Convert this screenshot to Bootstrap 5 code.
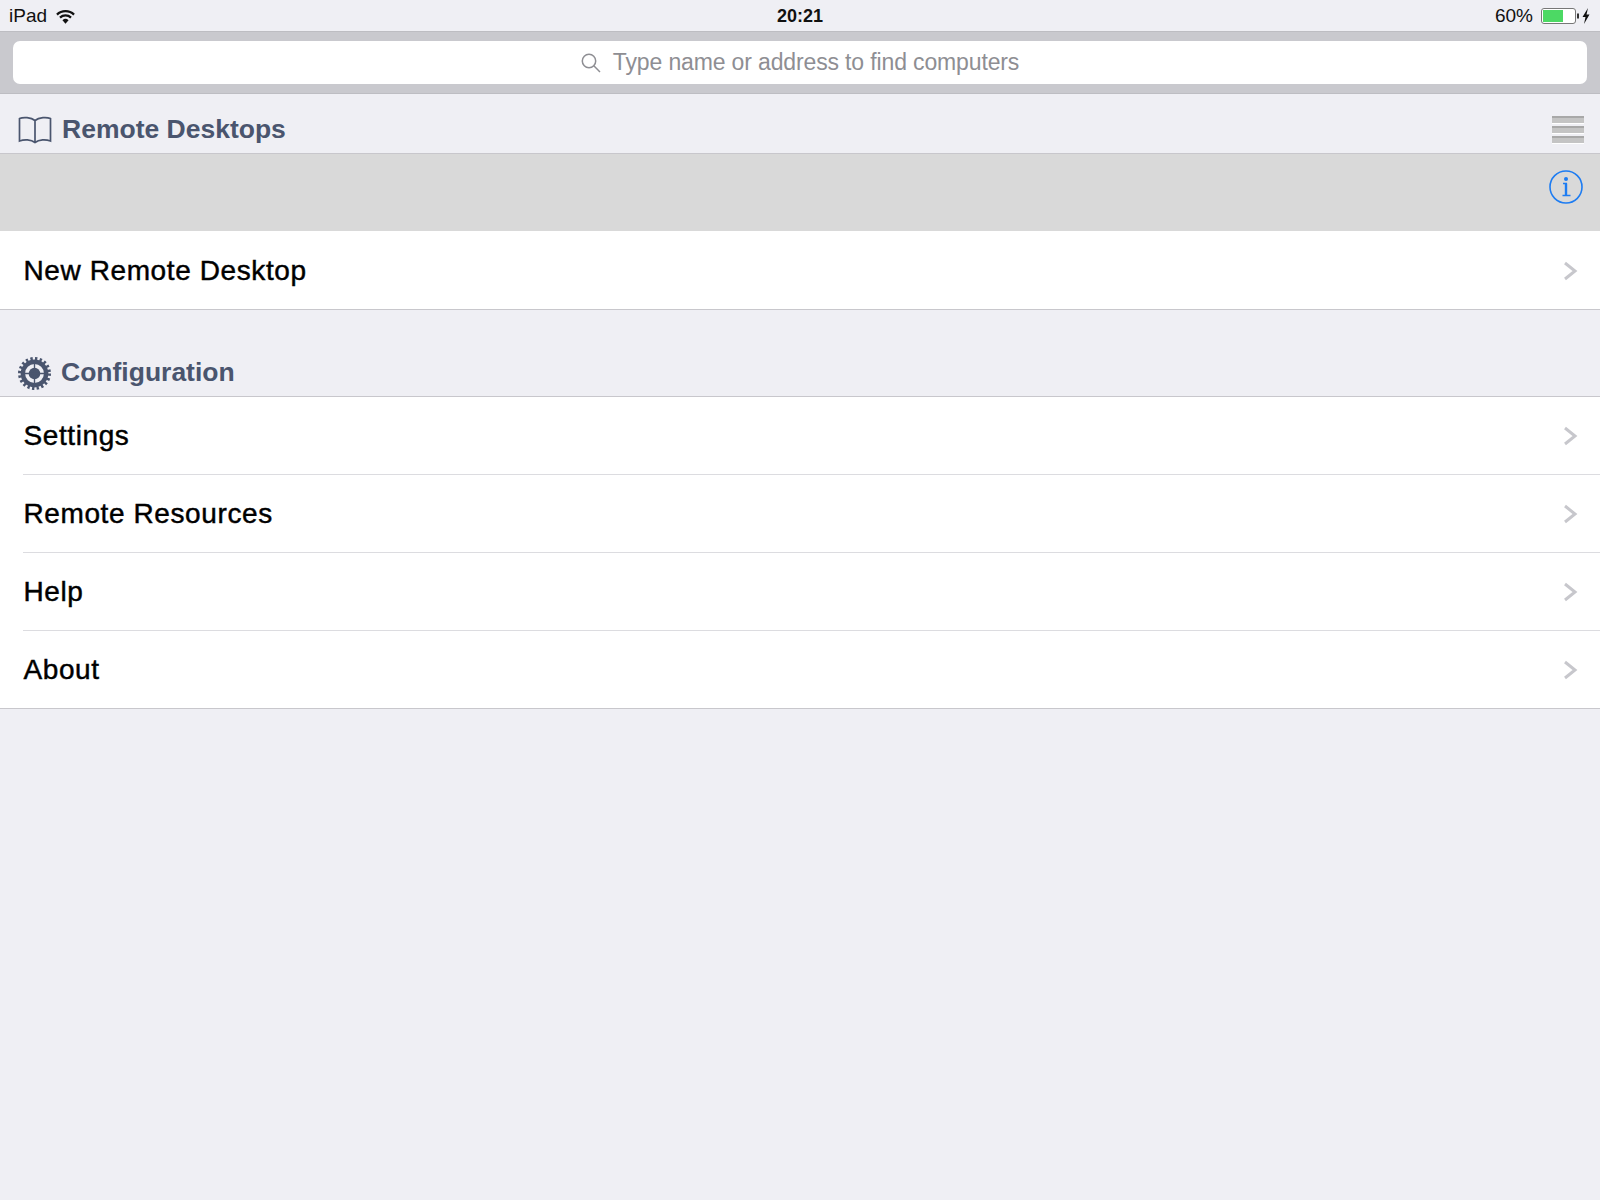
<!DOCTYPE html>
<html>
<head>
  <meta charset="utf-8">
  <title>Remote Desktop</title>
  <link href="https://cdn.jsdelivr.net/npm/bootstrap@5.3.0/dist/css/bootstrap.min.css" rel="stylesheet">
  <style>
    body { background: #efeff4; font-family: "Liberation Sans", Arial, sans-serif; min-height: 1200px; color: #000; }
    .status-strip { height: 31px; padding: 2px 9px 0; font-size: 19px; color: #111; }
    .status-strip > div { flex: 1 1 0; }
    .status-time { font-weight: 700; font-size: 18px; }
    .wifi-gap { gap: 9px; }
    .search-strip { height: 63px; background: #c9c9ce; border-top: 1px solid #bdbdc2; border-bottom: 1px solid #bdbdc2; padding: 9px 13px; }
    .search-field { height: 43px; background: #fff; border-radius: 7px; color: #8e8e93; font-size: 23px; letter-spacing: -0.14px; gap: 12px; }
    .group-head { color: #4a556e; font-size: 26.5px; font-weight: 700; padding-left: 18px; padding-right: 16px; gap: 10px; border-bottom: 1px solid #c8c7cc; }
    .head-top { height: 60px; padding-top: 12px; }
    .head-config { height: 87px; padding-top: 40px; }
    .blank-row { height: 77px; background: #d9d9d9; padding: 0 17px 11px 0; }
    .menu-rows { background: #fff; border-bottom: 1px solid #c8c7cc; }
    .menu-row { height: 78px; padding: 1px 22px 0 23.5px; font-size: 28px; font-weight: 500; letter-spacing: 0.6px; -webkit-text-stroke: 0.45px #000; }
    .menu-short { height: 77px; }
    .menu-row + .menu-row { position: relative; }
    .menu-row + .menu-row::before { content: ""; position: absolute; left: 23px; right: 0; top: 0; border-top: 1px solid #dcdce0; }
    .bars-btn { width: 32px; gap: 2px; }
    .bars-btn span { height: 8px; background: #c4c4c4; border-top: 2px solid #a8a8a8; border-bottom: 1px solid #fff; }
  </style>
</head>
<body>
  <div class="status-strip d-flex align-items-center">
    <div class="d-flex align-items-center wifi-gap">
      <span>iPad</span>
      <svg width="19" height="15" viewBox="0 0 20 15"><path d="M1 5.5 a13 13 0 0 1 18 0" fill="none" stroke="#111" stroke-width="2.4"/><path d="M4.2 8.7 a8.5 8.5 0 0 1 11.6 0" fill="none" stroke="#111" stroke-width="2.4"/><path d="M6.8 11.5 a4.6 4.6 0 0 1 6.4 0 L10 15 Z" fill="#111"/></svg>
    </div>
    <div class="status-time text-center">20:21</div>
    <div class="d-flex align-items-center justify-content-end gap-1">
      <span>60%</span>
      <svg class="ms-1" width="50" height="18" viewBox="0 1 50 18">
        <rect x="0.5" y="1.5" width="34" height="15" rx="2.5" fill="#fff" stroke="#777"/>
        <rect x="2" y="3" width="20" height="12" fill="#4cd964"/>
        <rect x="36" y="6.5" width="2" height="5" fill="#333"/>
        <path d="M47 1 L41.5 10 H44.5 L43 17 L48.5 7.5 H45.5 Z" fill="#111"/>
      </svg>
    </div>
  </div>

  <div class="search-strip">
    <div class="search-field d-flex align-items-center justify-content-center">
      <svg width="20" height="20" viewBox="0 0 20 20"><circle cx="8" cy="8" r="6.7" fill="none" stroke="#8e8e93" stroke-width="1.5"/><path d="M12.8 12.8 L19 19" stroke="#8e8e93" stroke-width="1.5"/></svg>
      <span>Type name or address to find computers</span>
    </div>
  </div>

  <div class="group-head head-top d-flex align-items-center">
    <svg width="34" height="28" viewBox="0 0 34 28"><path d="M17 4.5 C13 1 5 1 1.5 2.5 V25 C6 23.2 13 23.2 17 26.5 C21 23.2 28 23.2 32.5 25 V2.5 C29 1 21 1 17 4.5 Z M17 4.5 V26.5" fill="none" stroke="#4a556e" stroke-width="1.7"/></svg>
    <span class="flex-grow-1">Remote Desktops</span>
    <div class="bars-btn d-flex flex-column">
      <span></span><span></span><span></span>
    </div>
  </div>

  <div class="blank-row d-flex align-items-center justify-content-end">
    <svg width="34" height="34" viewBox="0 0 34 34"><circle cx="17" cy="17" r="16" fill="none" stroke="#1d7cf2" stroke-width="1.6"/><circle cx="17" cy="9" r="2" fill="#1d7cf2"/><path d="M14 13.5 H18 M13.5 25.5 H21.5" fill="none" stroke="#1d7cf2" stroke-width="1.6"/><path d="M17 13.5 V25.5" stroke="#1d7cf2" stroke-width="2.4"/></svg>
  </div>

  <div class="menu-rows">
    <div class="menu-row d-flex align-items-center justify-content-between">
      <span>New Remote Desktop</span>
      <svg width="15" height="20" viewBox="0 0 15 20"><path d="M2 2 L12 10 L2 18" fill="none" stroke="#c7c7cc" stroke-width="3"/></svg>
    </div>
  </div>

  <div class="group-head head-config d-flex align-items-center">
    <svg width="33" height="33" viewBox="0 0 34 34">
      <circle cx="17" cy="17" r="12" fill="none" stroke="#4a556e" stroke-width="4.6"/>
      <circle cx="17" cy="17" r="15.2" fill="none" stroke="#4a556e" stroke-width="3.6" stroke-dasharray="2.4 2.38"/>
      <circle cx="17" cy="17" r="6" fill="#4a556e"/>
      <path d="M17 6 V28 M6 17 H28" stroke="#4a556e" stroke-width="1.4"/>
    </svg>
    <span>Configuration</span>
  </div>

  <div class="menu-rows">
    <div class="menu-row menu-short d-flex align-items-center justify-content-between">
      <span>Settings</span>
      <svg width="15" height="20" viewBox="0 0 15 20"><path d="M2 2 L12 10 L2 18" fill="none" stroke="#c7c7cc" stroke-width="3"/></svg>
    </div>
    <div class="menu-row d-flex align-items-center justify-content-between">
      <span>Remote Resources</span>
      <svg width="15" height="20" viewBox="0 0 15 20"><path d="M2 2 L12 10 L2 18" fill="none" stroke="#c7c7cc" stroke-width="3"/></svg>
    </div>
    <div class="menu-row d-flex align-items-center justify-content-between">
      <span>Help</span>
      <svg width="15" height="20" viewBox="0 0 15 20"><path d="M2 2 L12 10 L2 18" fill="none" stroke="#c7c7cc" stroke-width="3"/></svg>
    </div>
    <div class="menu-row d-flex align-items-center justify-content-between">
      <span>About</span>
      <svg width="15" height="20" viewBox="0 0 15 20"><path d="M2 2 L12 10 L2 18" fill="none" stroke="#c7c7cc" stroke-width="3"/></svg>
    </div>
  </div>

  <script src="https://cdn.jsdelivr.net/npm/bootstrap@5.3.0/dist/js/bootstrap.bundle.min.js"></script>
</body>
</html>
